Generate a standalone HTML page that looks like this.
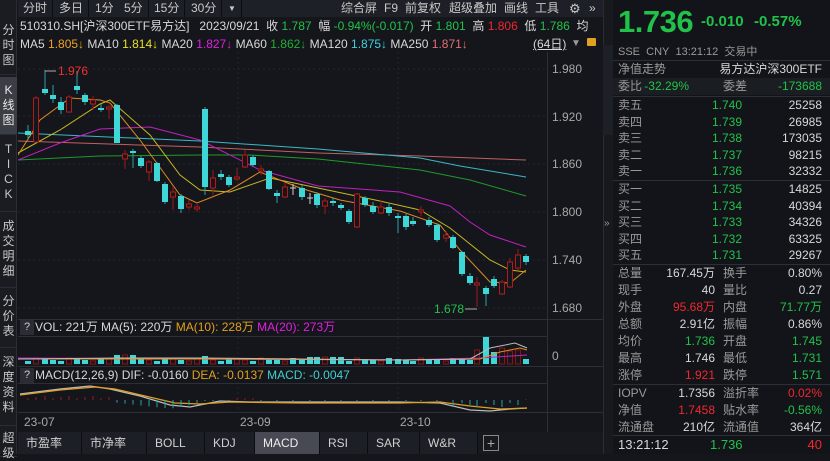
<!DOCTYPE html>
<html><head><meta charset="utf-8">
<style>
*{margin:0;padding:0;box-sizing:border-box}
body{width:830px;height:454px;background:#14161b;overflow:hidden;position:relative;font-family:"Liberation Sans","Noto Sans CJK SC",sans-serif;font-size:12px;color:#c8c8c8}
.a{position:absolute;white-space:nowrap}
.g{color:#21c24a}.r{color:#f0282f}.w{color:#d8d8d8}.gr{color:#9a9a9a}
.tab{position:absolute;left:0;width:17px;text-align:center;font-size:12px;line-height:15px;color:#c8c8c8;border-bottom:1px solid #2a2d33}
.tb{position:absolute;top:0;height:17px;line-height:17px;font-size:12px;color:#c8c8c8;padding:0 5px;border-right:1px solid #0c0d10;background:#1d2026}
.bt{position:absolute;top:432px;height:22px;line-height:22px;font-size:12px;color:#d0d0d0;background:#1c1f25;padding-left:8px;border-right:1px solid #0c0d10}
.rp{position:absolute;left:613px;width:217px;font-size:12px}
.rw{position:absolute;left:618px;width:204px;height:16px;line-height:16px}
.rw span{position:absolute}
</style></head><body>
<!-- left tab column -->
<div class="a" style="left:0;top:0;width:17px;height:454px;background:#1a1c21;border-right:1px solid #2a2d33"></div>
<div class="tab" style="top:17px;height:58px;padding-top:6px">分<br>时<br>图</div>
<div class="tab" style="top:77px;height:58px;padding-top:6px;background:#3b3e45;color:#e8e8e8">K<br>线<br>图</div>
<div class="tab" style="top:136px;height:76px;padding-top:6px">T<br>I<br>C<br>K</div>
<div class="tab" style="top:213px;height:75px;padding-top:6px">成<br>交<br>明<br>细</div>
<div class="tab" style="top:289px;height:59px;padding-top:5px">分<br>价<br>表</div>
<div class="tab" style="top:349px;height:77px;padding-top:6px">深<br>度<br>资<br>料</div>
<div class="tab" style="top:427px;height:30px;padding-top:4px">超<br>级</div>

<!-- top toolbar -->
<div class="a" style="left:18px;top:0;width:585px;height:17px;background:#1d2026"></div>
<div class="tb" style="left:18px">分时</div>
<div class="tb" style="left:54px">多日</div>
<div class="tb" style="left:90px">1分</div>
<div class="tb" style="left:119px">5分</div>
<div class="tb" style="left:149px">15分</div>
<div class="tb" style="left:186px">30分</div>
<div class="tb" style="left:223px;font-size:8px">▼</div>
<div class="tb" style="left:336px">综合屏</div>
<div class="tb" style="left:379px">F9</div>
<div class="tb" style="left:400px">前复权</div>
<div class="tb" style="left:444px">超级叠加</div>
<div class="tb" style="left:499px">画线</div>
<div class="tb" style="left:530px">工具</div>
<div class="tb" style="left:564px;font-size:13px">⚙</div>
<div class="tb" style="left:584px;border:none">»</div>

<!-- info rows -->
<div class="a" style="left:20px;top:18px;font-size:12px;line-height:16px"><span class="w">510310.SH[沪深300ETF易方达]</span>&nbsp;&nbsp;&nbsp;<span class="w">2023/09/21</span>&nbsp;&nbsp;<span class="w">收</span> <span class="g">1.787</span>&nbsp;&nbsp;<span class="w">幅</span> <span class="g">-0.94%(-0.017)</span>&nbsp;&nbsp;<span class="w">开</span> <span class="g">1.801</span>&nbsp;&nbsp;<span class="w">高</span> <span class="r">1.806</span>&nbsp;&nbsp;<span class="w">低</span> <span class="g">1.786</span>&nbsp;&nbsp;<span class="w">均</span></div>
<div class="a" style="left:20px;top:36px;font-size:12px;line-height:16px"><span class="w">MA5</span> <span style="color:#f0a020">1.805↓</span> <span class="w">MA10</span> <span style="color:#e8e020">1.814↓</span> <span class="w">MA20</span> <span style="color:#e020e0">1.827↓</span> <span class="w">MA60</span> <span style="color:#20b030">1.862↓</span> <span class="w">MA120</span> <span style="color:#40d0e0">1.875↓</span> <span class="w">MA250</span> <span style="color:#e07070">1.871↓</span></div>
<div class="a w" style="left:533px;top:36px;line-height:16px;text-decoration:underline">(64日)</div>
<div class="a gr" style="left:571px;top:36px;line-height:16px;font-size:10px">▼</div>
<div class="a" style="left:587px;top:38px;width:9px;height:8px;background:#e0a020;border-radius:1px"></div>

<!-- chart svg -->
<svg class="a" style="left:18px;top:52px" width="585" height="380" viewBox="18 52 585 380" id="ch">
<g stroke="#22252b" stroke-width="1" stroke-dasharray="2,3">
<line x1="18" y1="69" x2="547" y2="69"/><line x1="18" y1="116" x2="547" y2="116"/><line x1="18" y1="164" x2="547" y2="164"/><line x1="18" y1="212" x2="547" y2="212"/><line x1="18" y1="260" x2="547" y2="260"/><line x1="18" y1="308" x2="547" y2="308"/>
<line x1="238" y1="52" x2="238" y2="412"/><line x1="398" y1="52" x2="398" y2="412"/>
</g>
<g stroke="#2c2f36" stroke-width="1">
<line x1="18" y1="319.5" x2="603" y2="319.5"/><line x1="18" y1="336.5" x2="547" y2="336.5"/><line x1="18" y1="366.5" x2="603" y2="366.5"/><line x1="18" y1="383.5" x2="547" y2="383.5"/><line x1="18" y1="412.5" x2="603" y2="412.5"/>
<line x1="547.5" y1="52" x2="547.5" y2="432"/>
</g>
<g fill="#a8a8a8" font-size="12" font-family="Liberation Sans">
<text x="552" y="73">1.980</text><text x="552" y="121">1.920</text><text x="552" y="168">1.860</text><text x="552" y="216">1.800</text><text x="552" y="264">1.740</text><text x="552" y="312">1.680</text><text x="552" y="360">0</text>
<text x="24" y="426">23-07</text><text x="240" y="426">23-09</text><text x="400" y="426">23-10</text>
</g>
<g fill="none" stroke-width="1">
<polyline stroke="#c06060" points="18,141 200,147 318,153 420,156 526,160"/>
<polyline stroke="#3ab8c8" points="18,133 200,141 318,149 420,158 460,166 526,177"/>
<polyline stroke="#1f9a2a" points="18,160 100,156 200,155 250,155 318,159 420,170 470,180 526,196"/>
<polyline stroke="#c020c0" points="18,160 60,143 100,129 150,127 200,140 260,170 318,186 400,192 450,206 470,222 490,235 526,247"/>
<polyline stroke="#c8b820" points="18,153 60,130 100,104 110,100 150,135 180,175 200,190 230,192 270,178 318,188 380,201 420,210 450,228 490,260 510,270 526,272"/>
<polyline stroke="#e08a20" points="18,155 40,120 70,98 100,100 110,103 140,140 180,195 197,203 230,190 260,172 300,188 340,200 400,211 440,225 460,250 490,282 510,283 526,270"/>
</g>
<g id="cd"></g>
<text x="58" y="75" fill="#f03030" font-size="12" font-family="Liberation Sans">1.976</text>
<line x1="45" y1="71" x2="56" y2="71" stroke="#aaa"/>
<text x="434" y="313" fill="#21c24a" font-size="12" font-family="Liberation Sans">1.678</text>
<line x1="465" y1="309" x2="477" y2="309" stroke="#aaa"/>
<!-- vol lines -->
<g fill="none" stroke-width="1">
<polyline stroke="#c020c0" points="18,358 200,359 400,360 480,358 527,355"/>
<polyline stroke="#e08a20" points="18,359 200,359 400,360 480,359 500,352 520,348 527,350"/>
<polyline stroke="#bbb" points="18,359 120,358 200,358 400,360 470,359 490,348 515,343 527,348"/>
</g>
<!-- macd lines -->
<g fill="none" stroke-width="1.2">
<polyline stroke="#bbb" points="20,394 60,389 90,386 110,389 140,396 170,405 190,407 220,401 250,402 300,402 400,402 440,403 470,410 490,411 510,409 527,408"/>
<polyline stroke="#e0a020" points="20,395 60,390 95,387 115,389 145,396 175,403 200,404 230,402 300,403 400,403 440,402 470,406 500,409 527,408"/>
</g>
<g id="mh"></g>
<text x="96" y="426" fill="#555" font-size="1">.</text>
</svg>

<!-- panel labels -->
<div class="a" style="left:20px;top:320px;width:14px;height:15px;background:#2a2d33;color:#ccc;text-align:center;line-height:15px;font-size:11px">?</div>
<div class="a" style="left:35px;top:319px;line-height:17px;font-size:12px"><span class="w">VOL: 221万 MA(5): 220万</span> <span style="color:#e0a020">MA(10): 228万</span> <span style="color:#e020e0">MA(20): 273万</span></div>
<div class="a" style="left:20px;top:368px;width:14px;height:15px;background:#2a2d33;color:#ccc;text-align:center;line-height:15px;font-size:11px">?</div>
<div class="a" style="left:35px;top:367px;line-height:17px;font-size:12px"><span class="w">MACD(12,26,9) DIF: -0.0160</span> <span style="color:#e0a020">DEA: -0.0137</span> <span style="color:#40d0d0">MACD: -0.0047</span></div>

<!-- bottom tabs -->
<div class="a" style="left:18px;top:432px;width:585px;height:22px;background:#17191e"></div>
<div class="bt" style="left:18px;width:64px">市盈率</div>
<div class="bt" style="left:82px;width:65px">市净率</div>
<div class="bt" style="left:147px;width:58px">BOLL</div>
<div class="bt" style="left:205px;width:50px">KDJ</div>
<div class="bt" style="left:255px;width:65px;background:#474a52;color:#eee">MACD</div>
<div class="bt" style="left:320px;width:48px">RSI</div>
<div class="bt" style="left:368px;width:52px">SAR</div>
<div class="bt" style="left:420px;width:58px">W&amp;R</div>
<div class="a" style="left:483px;top:435px;width:16px;height:16px;border:1px solid #888;color:#aaa;text-align:center;line-height:14px;font-size:14px">+</div>

<!-- side strip -->
<div class="a" style="left:603px;top:0;width:10px;height:454px;background:#17191d;border-left:1px solid #2a2d33"></div>
<div class="a" style="left:603px;top:45px;width:10px;height:90px;background:#1d2026"></div>
<div class="a gr" style="left:604px;top:218px;font-size:10px">»</div>

<!-- right panel -->
<div class="a" style="left:613px;top:0;width:217px;height:454px;background:#121419"></div>
<div class="a g" style="left:618px;top:5px;font-size:31px;line-height:34px;font-weight:bold;letter-spacing:-0.5px">1.736</div>
<div class="a g" style="left:701px;top:13px;font-size:15px;font-weight:bold">-0.010</div>
<div class="a g" style="left:754px;top:13px;font-size:15px;font-weight:bold">-0.57%</div>
<div class="a gr" style="left:618px;top:45px;font-size:11px;line-height:14px">SSE&nbsp; CNY&nbsp; 13:21:12&nbsp; 交易中</div>
<div class="a" style="left:613px;top:60px;width:217px;border-top:1px solid #2c2f36"></div>
<div class="rw" style="top:61px"><span class="gr" style="left:0">净值走势</span><span class="w" style="right:0">易方达沪深300ETF</span></div>
<div class="a" style="left:613px;top:78px;width:217px;height:17px;background:#1a1d22"></div>
<div class="rw" style="top:78px"><span class="gr" style="left:0">委比</span><span class="g" style="right:133px">-32.29%</span><span class="gr" style="left:105px">委差</span><span class="g" style="right:0">-173688</span></div>
<div class="a" style="left:613px;top:96px;width:217px;border-top:1px solid #2c2f36"></div>
<div id="ob"></div>
<div class="a" style="left:613px;top:180px;width:217px;border-top:1px solid #2c2f36"></div>
<div class="a" style="left:613px;top:264px;width:217px;border-top:1px solid #2c2f36"></div>
<div class="a" style="left:613px;top:384px;width:217px;border-top:1px solid #2c2f36"></div>
<div class="a" style="left:613px;top:435px;width:217px;border-top:1px solid #2c2f36"></div>
<div id="st"></div>
<div class="rw" style="top:437px;font-size:13px"><span class="w" style="left:0">13:21:12</span><span class="g" style="left:92px">1.736</span><span class="r" style="right:0">40</span></div>

<script>
var ns="http://www.w3.org/2000/svg";
function el(p,t,a){var e=document.createElementNS(ns,t);for(var k in a)e.setAttribute(k,a[k]);p.appendChild(e);return e;}
// [x, top, bottom, wickTop, wickBot, color r/t/w]
var C=[[28,131,135,125,140,'t'],[36,98,142,96,142,'r'],[45,89,93,70,95,'t'],[53,95,99,85,103,'t'],[61,102,110,97,114,'t'],[69,97,112,95,113,'r'],[77,86,90,71,94,'t'],[85,95,102,93,105,'t'],[93,100,104,96,110,'r'],[101,108,110,104,112,'t'],[109,107,109,105,119,'r'],[117,105,143,104,143,'t'],[125,154,159,150,169,'r'],[133,151,153,149,168,'t'],[141,158,166,156,168,'t'],[149,162,172,160,181,'r'],[157,163,181,162,182,'t'],[165,184,202,182,204,'t'],[173,192,197,186,210,'r'],[181,196,209,194,213,'t'],[189,204,207,200,210,'r'],[197,207,209,203,212,'r'],[205,109,187,107,195,'t'],[213,178,188,170,195,'r'],[221,174,177,170,180,'t'],[229,177,185,175,187,'t'],[237,177,179,168,181,'r'],[245,155,167,150,168,'r'],[253,157,165,155,167,'t'],[261,169,171,165,175,'r'],[269,171,189,170,190,'t'],[277,193,196,190,203,'t'],[285,187,197,183,198,'r'],[293,188,189,184,195,'w'],[302,188,197,185,200,'t'],[310,198,199,193,204,'w'],[317,194,205,192,208,'t'],[325,201,206,198,214,'r'],[333,201,203,198,206,'t'],[341,205,208,203,210,'t'],[349,211,222,209,224,'t'],[357,194,227,193,228,'r'],[365,198,205,196,207,'t'],[373,206,212,202,214,'t'],[381,207,213,200,214,'r'],[389,207,213,203,216,'t'],[398,216,218,213,233,'t'],[406,216,227,214,230,'t'],[413,221,224,217,226,'t'],[421,210,212,206,216,'r'],[429,220,225,217,227,'t'],[437,225,240,223,242,'t'],[446,235,238,231,242,'r'],[453,237,248,235,249,'t'],[462,252,274,251,276,'t'],[470,276,283,273,285,'t'],[477,283,285,277,307,'r'],[486,288,294,286,306,'t'],[494,279,286,276,288,'t'],[502,282,294,280,295,'r'],[510,262,287,258,288,'r'],[518,255,268,249,270,'r'],[526,256,262,254,265,'t']];
var g=document.getElementById('cd'),mh=document.getElementById('mh');
var col={r:'#d02020',t:'#3fd6d8',w:'#cfcfcf'};
C.forEach(function(c,i){var x=c[0],cl=col[c[5]];
 el(g,'line',{x1:x,x2:x,y1:c[3],y2:c[4],stroke:c[5]=='r'?'#a01818':(c[5]=='t'?'#2aa0a8':cl),'stroke-width':1});
 var h=Math.max(1.5,c[2]-c[1]);
 if(c[5]=='r')el(g,'rect',{x:x-2.5,y:c[1],width:5,height:h,fill:'#14161b',stroke:'#b01c1c','stroke-width':1});
 else if(c[5]=='t')el(g,'rect',{x:x-3,y:c[1],width:6,height:h,fill:cl});
 else el(g,'line',{x1:x-3,x2:x+3,y1:c[1],y2:c[1],stroke:cl});
 // volume
 var vh=3+((i*7)%4);
 if(i>=35&&i<40)vh=7; if(i==11||i==12||i==13)vh=9; if(i==22)vh=8;
 if(x>=477){vh=[14,0,12,16,13,14,5][i-56]||5;}
 if(x==486)vh=27;
 if(c[5]=='r')el(g,'rect',{x:x-2.5,y:364-vh,width:5,height:vh,fill:'none',stroke:'#8a1414'});
 else el(g,'rect',{x:x-3,y:364-vh,width:6,height:vh,fill:'#3fd6d8'});
 // macd hist
 var mv=0;
 if(x<110)mv=-(2+(i%3)); else if(x<200)mv=2+((x-110)/90)*10*(x<170?1:(200-x)/30); else if(x<230)mv=1; else if(x<260)mv=-2; else if(x<450)mv=(i%2)?1:0; else if(x<520)mv=3+(i%3)*2; else mv=-1;
 if(mv)el(mh,'line',{x1:x,x2:x,y1:400,y2:400+mv,stroke:mv<0?'#a01818':'#2aa0a8'});
});
// order book
var ob=[['卖五','1.740','25258'],['卖四','1.739','26985'],['卖三','1.738','173035'],['卖二','1.737','98215'],['卖一','1.736','32332']];
var bb=[['买一','1.735','14825'],['买二','1.734','40394'],['买三','1.733','34326'],['买四','1.732','63325'],['买五','1.731','29267']];
var h='';
ob.forEach(function(r,i){h+='<div class="rw" style="top:'+(97+i*16.5)+'px"><span class="gr" style="left:0">'+r[0]+'</span><span class="g" style="right:80px">'+r[1]+'</span><span class="w" style="right:0">'+r[2]+'</span></div>';});
bb.forEach(function(r,i){h+='<div class="rw" style="top:'+(181+i*16.5)+'px"><span class="gr" style="left:0">'+r[0]+'</span><span class="g" style="right:80px">'+r[1]+'</span><span class="w" style="right:0">'+r[2]+'</span></div>';});
document.getElementById('ob').innerHTML=h;
var st=[['总量','167.45万','w','换手','0.80%','w'],['现手','40','w','量比','0.27','w'],['外盘','95.68万','r','内盘','71.77万','g'],['总额','2.91亿','w','振幅','0.86%','w'],['均价','1.736','g','开盘','1.745','g'],['最高','1.746','w','最低','1.731','g'],['涨停','1.921','r','跌停','1.571','g']];
var s2=[['IOPV','1.7356','w','溢折率','0.02%','r'],['净值','1.7458','r','贴水率','-0.56%','g'],['流通盘','210亿','w','流通值','364亿','w']];
h='';
st.forEach(function(r,i){h+='<div class="rw" style="top:'+(265+i*17)+'px"><span class="gr" style="left:0">'+r[0]+'</span><span class="'+r[2]+'" style="right:107px">'+r[1]+'</span><span class="gr" style="left:105px">'+r[3]+'</span><span class="'+r[5]+'" style="right:0">'+r[4]+'</span></div>';});
s2.forEach(function(r,i){h+='<div class="rw" style="top:'+(385+i*17)+'px"><span class="gr" style="left:0">'+r[0]+'</span><span class="'+r[2]+'" style="right:107px">'+r[1]+'</span><span class="gr" style="left:105px">'+r[3]+'</span><span class="'+r[5]+'" style="right:0">'+r[4]+'</span></div>';});
document.getElementById('st').innerHTML=h;
</script>
</body></html>
